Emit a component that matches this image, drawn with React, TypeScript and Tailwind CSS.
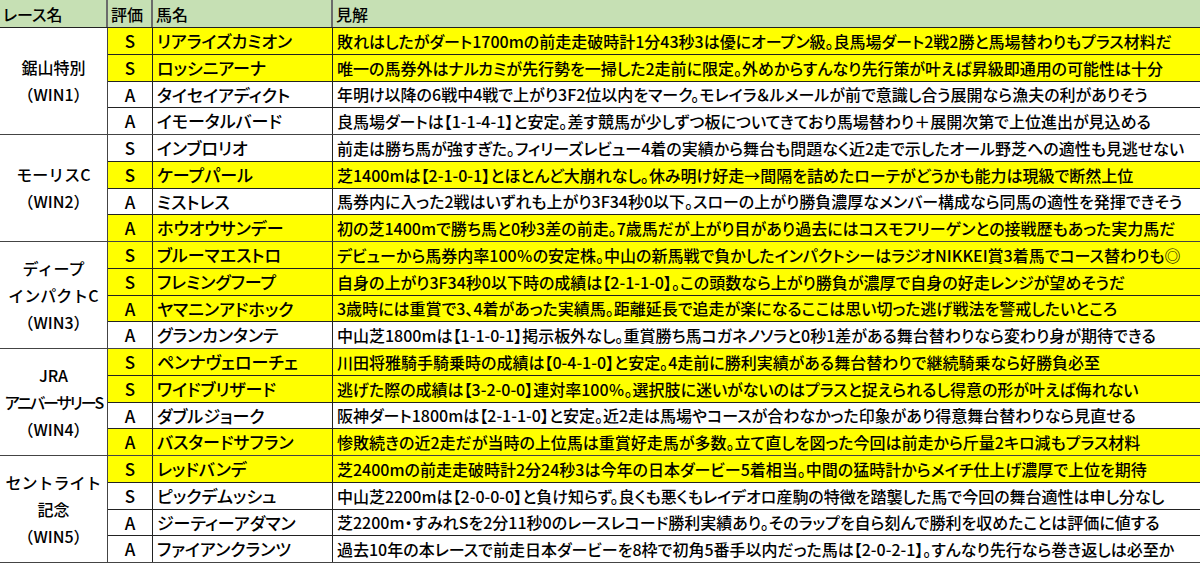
import React from 'react';

type Row = { grade: 'S' | 'A'; horse: string; note: string; hl: boolean };
type Race = { name: string[]; rows: Row[] };

const races: Race[] = [
  {
    name: ['鋸山特別', '（WIN1）'],
    rows: [
      { grade: 'S', horse: 'リアライズカミオン', hl: true, note: '敗れはしたがダート1700mの前走走破時計1分43秒3は優にオープン級。良馬場ダート2戦2勝と馬場替わりもプラス材料だ' },
      { grade: 'S', horse: 'ロッシニアーナ', hl: true, note: '唯一の馬券外はナルカミが先行勢を一掃した2走前に限定。外めからすんなり先行策が叶えば昇級即通用の可能性は十分' },
      { grade: 'A', horse: 'タイセイアディクト', hl: false, note: '年明け以降の6戦中4戦で上がり3F2位以内をマーク。モレイラ＆ルメールが前で意識し合う展開なら漁夫の利がありそう' },
      { grade: 'A', horse: 'イモータルバード', hl: false, note: '良馬場ダートは【1-1-4-1】と安定。差す競馬が少しずつ板についてきており馬場替わり＋展開次第で上位進出が見込める' },
    ],
  },
  {
    name: ['モーリスC', '（WIN2）'],
    rows: [
      { grade: 'S', horse: 'インブロリオ', hl: false, note: '前走は勝ち馬が強すぎた。フィリーズレビュー4着の実績から舞台も問題なく近2走で示したオール野芝への適性も見逃せない' },
      { grade: 'S', horse: 'ケープパール', hl: true, note: '芝1400mは【2-1-0-1】とほとんど大崩れなし。休み明け好走→間隔を詰めたローテがどうかも能力は現級で断然上位' },
      { grade: 'A', horse: 'ミストレス', hl: false, note: '馬券内に入った2戦はいずれも上がり3F34秒0以下。スローの上がり勝負濃厚なメンバー構成なら同馬の適性を発揮できそう' },
      { grade: 'A', horse: 'ホウオウサンデー', hl: true, note: '初の芝1400mで勝ち馬と0秒3差の前走。7歳馬だが上がり目があり過去にはコスモフリーゲンとの接戦歴もあった実力馬だ' },
    ],
  },
  {
    name: ['ディープ', 'インパクトC', '（WIN3）'],
    rows: [
      { grade: 'S', horse: 'ブルーマエストロ', hl: true, note: 'デビューから馬券内率100％の安定株。中山の新馬戦で負かしたインパクトシーはラジオNIKKEI賞3着馬でコース替わりも◎' },
      { grade: 'S', horse: 'フレミングフープ', hl: true, note: '自身の上がり3F34秒0以下時の成績は【2-1-1-0】。この頭数なら上がり勝負が濃厚で自身の好走レンジが望めそうだ' },
      { grade: 'A', horse: 'ヤマニンアドホック', hl: true, note: '3歳時には重賞で3、4着があった実績馬。距離延長で追走が楽になるここは思い切った逃げ戦法を警戒したいところ' },
      { grade: 'A', horse: 'グランカンタンテ', hl: false, note: '中山芝1800mは【1-1-0-1】掲示板外なし。重賞勝ち馬コガネノソラと0秒1差がある舞台替わりなら変わり身が期待できる' },
    ],
  },
  {
    name: ['JRA', 'アニバーサリーS', '（WIN4）'],
    rows: [
      { grade: 'S', horse: 'ペンナヴェローチェ', hl: true, note: '川田将雅騎手騎乗時の成績は【0-4-1-0】と安定。4走前に勝利実績がある舞台替わりで継続騎乗なら好勝負必至' },
      { grade: 'S', horse: 'ワイドブリザード', hl: true, note: '逃げた際の成績は【3-2-0-0】連対率100％。選択肢に迷いがないのはプラスと捉えられるし得意の形が叶えば侮れない' },
      { grade: 'A', horse: 'ダブルジョーク', hl: false, note: '阪神ダート1800mは【2-1-1-0】と安定。近2走は馬場やコースが合わなかった印象があり得意舞台替わりなら見直せる' },
      { grade: 'A', horse: 'バスタードサフラン', hl: true, note: '惨敗続きの近2走だが当時の上位馬は重賞好走馬が多数。立て直しを図った今回は前走から斤量2キロ減もプラス材料' },
    ],
  },
  {
    name: ['セントライト', '記念', '（WIN5）'],
    rows: [
      { grade: 'S', horse: 'レッドバンデ', hl: true, note: '芝2400mの前走走破時計2分24秒3は今年の日本ダービー5着相当。中間の猛時計からメイチ仕上げ濃厚で上位を期待' },
      { grade: 'S', horse: 'ピックデムッシュ', hl: false, note: '中山芝2200mは【2-0-0-0】と負け知らず。良くも悪くもレイデオロ産駒の特徴を踏襲した馬で今回の舞台適性は申し分なし' },
      { grade: 'A', horse: 'ジーティーアダマン', hl: false, note: '芝2200m・すみれSを2分11秒0のレースレコード勝利実績あり。そのラップを自ら刻んで勝利を収めたことは評価に値する' },
      { grade: 'A', horse: 'ファイアンクランツ', hl: false, note: '過去10年の本レースで前走日本ダービーを8枠で初角5番手以内だった馬は【2-0-2-1】。すんなり先行なら巻き返しは必至か' },
    ],
  },
];

const font = { fontFamily: '"Noto Sans CJK JP", "Noto Sans", sans-serif', fontFeatureSettings: '"palt"' };

export default function App() {
  return (
    <div className="w-[1200px] h-[565px] overflow-hidden bg-white text-[16px] text-black font-medium" style={font}>
      {/* Header */}
      <div className="flex h-[28px] bg-[#c6e0b4] border-b border-[#222]">
        <div className="w-[108px] shrink-0 flex items-center pl-[3px] border-r-2 border-[#6b6b6b]">レース名</div>
        <div className="w-[45px] shrink-0 flex items-center pl-[3px] border-r-2 border-[#6b6b6b]">評価</div>
        <div className="w-[180px] shrink-0 flex items-center pl-[3px] border-r-2 border-[#6b6b6b]">馬名</div>
        <div className="flex-1 flex items-center pl-[3px]">見解</div>
      </div>

      {races.map((race, gi) => (
        <div key={gi} className="flex">
          {/* Race name (merged cell) */}
          <div className="w-[108px] h-[107px] shrink-0 flex flex-col items-center justify-center border-r border-b border-[#444] leading-[27px] whitespace-nowrap">
            {race.name.map((line, li) => (
              <div
                key={li}
                className={
                  line.length > 7
                    ? 'tracking-[-2px]'
                    : '[font-feature-settings:normal] [text-spacing-trim:space-all]'
                }
              >
                {line}
              </div>
            ))}
          </div>
          <div className="flex-1 flex flex-col">
            {race.rows.map((row, ri) => (
              <div
                key={ri}
                className={
                  'flex h-[26.75px] border-b ' +
                  (ri === 3 ? 'border-[#444] ' : 'border-[#222] ') +
                  (row.hl ? 'bg-[#ffff00]' : 'bg-white')
                }
              >
                <div className="w-[45px] shrink-0 flex items-center justify-center border-r border-[#222] text-[17px]">{row.grade}</div>
                <div className="w-[180px] shrink-0 flex items-center pl-[4px] border-r border-[#222] whitespace-nowrap text-[17px]">{row.horse}</div>
                <div className="flex-1 flex items-center pl-[4px] whitespace-nowrap overflow-hidden">{row.note}</div>
              </div>
            ))}
          </div>
        </div>
      ))}
    </div>
  );
}
